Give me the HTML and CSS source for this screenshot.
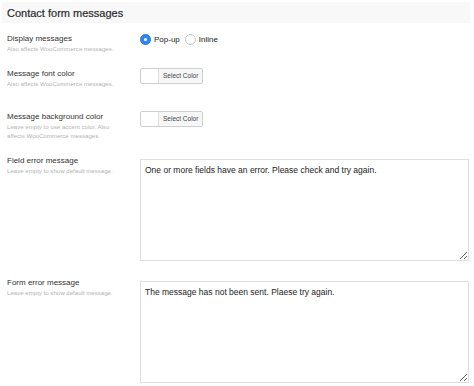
FILE: index.html
```html
<!DOCTYPE html>
<html>
<head>
<meta charset="utf-8">
<link rel="stylesheet" href="styles.css">
</head>
<body>
<div class="panel">
  <h2 class="panel-title">Contact form messages</h2>
  <div class="rows">
    <div class="row row-radio">
      <div class="label">
        <div class="label-title">Display messages</div>
        <div class="label-desc">Also affects WooCommerce messages.</div>
      </div>
      <div class="control radios">
        <label class="radio"><span class="dot checked"></span>Pop-up</label>
        <label class="radio"><span class="dot"></span>Inline</label>
      </div>
    </div>
    <div class="row row-color1">
      <div class="label">
        <div class="label-title">Message font color</div>
        <div class="label-desc">Also affects WooCommerce messages.</div>
      </div>
      <div class="control">
        <button class="color-btn"><span class="swatch"></span><span class="color-text">Select Color</span></button>
      </div>
    </div>
    <div class="row row-color2">
      <div class="label">
        <div class="label-title">Message background color</div>
        <div class="label-desc">Leave empty to use accent color. Also affects WooCommerce messages.</div>
      </div>
      <div class="control">
        <button class="color-btn"><span class="swatch"></span><span class="color-text">Select Color</span></button>
      </div>
    </div>
    <div class="row row-text1">
      <div class="label">
        <div class="label-title">Field error message</div>
        <div class="label-desc">Leave empty to show default message.</div>
      </div>
      <div class="control">
        <textarea class="textarea">One or more fields have an error. Please check and try again.</textarea>
      </div>
    </div>
    <div class="row row-text2">
      <div class="label">
        <div class="label-title">Form error message</div>
        <div class="label-desc">Leave empty to show default message.</div>
      </div>
      <div class="control">
        <textarea class="textarea">The message has not been sent. Plaese try again.</textarea>
      </div>
    </div>
  </div>
</div>
</body>
</html>
```

FILE: styles.css
```css
* { box-sizing: border-box; }
html, body { margin: 0; padding: 0; background: #fff; }
body {
  font-family: "Liberation Sans", Arial, sans-serif;
  color: #333;
  width: 474px;
  height: 386px;
  overflow: hidden;
}
.panel { padding: 2px 4px 0 2px; }
.panel-title {
  margin: 0;
  background: #f8f8f8;
  height: 21px;
  line-height: 22px;
  padding-left: 5px;
  font-size: 11px;
  font-weight: normal;
  color: #2a2a2a;
  -webkit-text-stroke: 0.2px #2a2a2a;
}
.rows { display: flex; flex-direction: column; padding: 0 0 0 5px; }
.row { display: flex; align-items: flex-start; }
.row-radio { margin-top: 9.5px; }
.row-color1 { margin-top: 14.5px; }
.row-color2 { margin-top: 22.5px; }
.row-text1 { margin-top: 14px; }
.row-text2 { margin-top: 16px; }
.label { width: 133px; flex: none; }
.label-title { font-size: 8px; line-height: 11px; color: #333; }
.label-desc { font-size: 6.1px; line-height: 9.5px; color: #b3b3b3; max-width: 112px; }
.control { flex: 1; }
.radios { display: flex; gap: 5px; align-items: center; margin-top: 0.5px; }
.radio { display: flex; align-items: center; gap: 3px; font-size: 8px; color: #222; height: 12px; }
.dot {
  width: 11px; height: 11px; border-radius: 50%;
  border: 1px solid #c4c4c4; background: #fff;
  display: inline-block; position: relative;
}
.dot.checked { background: #2e87ef; border-color: #2478dd; }
.dot.checked::after {
  content: ""; position: absolute; left: 3px; top: 3px;
  width: 3px; height: 3px; border-radius: 50%; background: #fff;
}
.color-btn {
  display: flex; align-items: stretch; height: 16px; padding: 0;
  border: 1px solid #cfcfcf; border-radius: 2px; background: #f7f7f7;
  font-family: inherit; margin-top: 0.5px;
}
.swatch { width: 18px; background: #fff; border-right: 1px solid #ddd; border-radius: 2px 0 0 2px; }
.color-text { font-size: 6.5px; line-height: 14px; padding: 0 4px 0 4px; color: #444; }
.textarea {
  display: block; width: 329px; height: 102px; margin-top: 4px;
  border: 1px solid #dedede; border-radius: 0; padding: 5px 4px;
  font-family: inherit; font-size: 8.5px; line-height: 11px; color: #222;
  resize: vertical; background: #fff;
}
```
